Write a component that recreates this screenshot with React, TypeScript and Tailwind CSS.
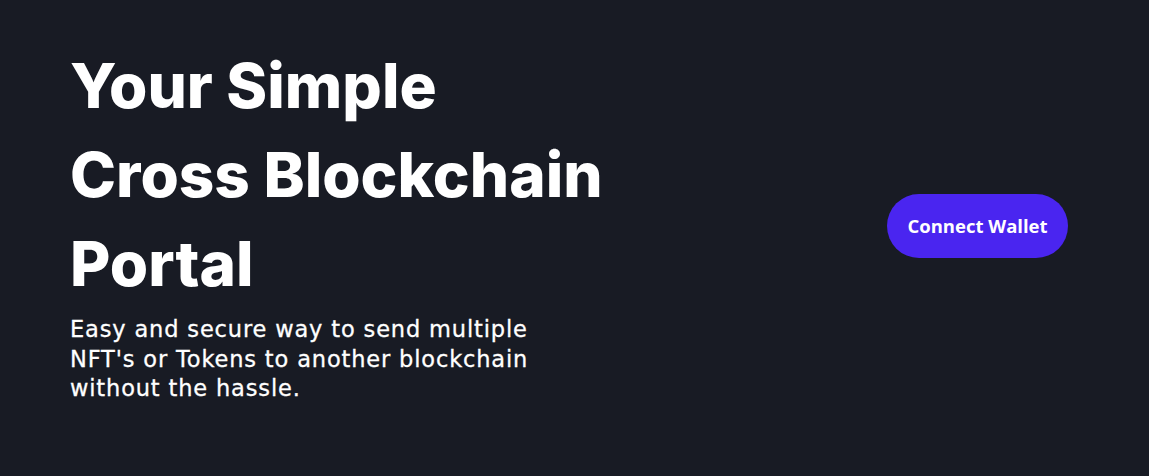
export default function App() {
  return (
    <div className="min-h-[476px] w-full bg-[#181b24] text-white">
      <section className="flex h-[476px] items-start justify-between pl-[70px] pr-[81px] pt-[41px]">
        <div className="flex flex-col">
          <h1 className="font-['Inter',sans-serif] text-[62px] font-extrabold leading-[89px]">
            Your Simple
            <br />
            Cross Blockchain
            <br />
            Portal
          </h1>
          <p className="mt-[7px] w-[540px] font-['DejaVu_Sans',sans-serif] text-[22.5px] leading-[29.5px] tracking-[0.85px] [-webkit-text-stroke:0.3px_white]">
            Easy and secure way to send multiple
            <br />
            NFT's or Tokens to another blockchain
            <br />
            without the hassle.
          </p>
        </div>
        <button className="mt-[153px] h-[64px] w-[181px] rounded-full bg-[#4a25f0] font-['Open_Sans',sans-serif] text-[18.5px] font-bold text-white">
          Connect Wallet
        </button>
      </section>
    </div>
  );
}
